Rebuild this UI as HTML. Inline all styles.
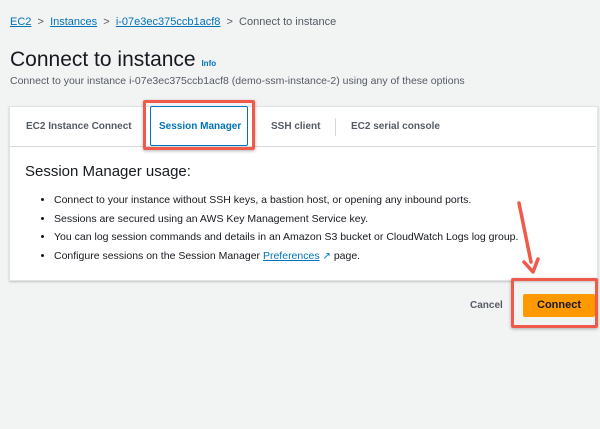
<!DOCTYPE html><html><head><style>
body{margin:0;width:600px;height:429px;background:#f2f3f3;font-family:"Liberation Sans",sans-serif;position:relative;overflow:hidden;color:#16191f}
.a{position:absolute;white-space:nowrap}
.lnk{color:#0073bb;text-decoration:underline}
</style></head><body>
<div class="a" style="left:10px;top:16px;font-size:11px;color:#545b64">
<span class="lnk">EC2</span> &nbsp;&gt;&nbsp; <span class="lnk">Instances</span> &nbsp;&gt;&nbsp; <span class="lnk">i-07e3ec375ccb1acf8</span> &nbsp;&gt;&nbsp; <span style="color:#545b64">Connect to instance</span></div>
<div class="a" style="left:10px;top:48px;font-size:21px">Connect to instance <span style="font-size:8px;font-weight:bold;color:#0073bb">Info</span></div>
<div class="a" style="left:10px;top:75px;font-size:10.5px;color:#545b64">Connect to your instance i-07e3ec375ccb1acf8 (demo-ssm-instance-2) using any of these options</div>
<div class="a" style="left:9px;top:106px;width:587px;height:173px;background:#fff;border:1px solid #e1e4e6;box-shadow:0 1px 2px rgba(0,0,0,.2)"></div>
<div class="a" style="left:10px;top:146px;width:586px;height:1px;background:#d5dbdb"></div>
<div class="a" style="left:26px;top:121px;font-size:10px;font-weight:bold;color:#545b64">EC2 Instance Connect</div>
<div class="a" style="left:150px;top:106px;width:96px;height:38px;border:1.5px solid #0073bb;border-radius:2px"></div>
<div class="a" style="left:159px;top:121px;font-size:10px;font-weight:bold;color:#0073bb">Session Manager</div>
<div class="a" style="left:143px;top:100px;width:106px;height:44px;border:3px solid #f05a4a;border-radius:2px;box-shadow:0 1px 3px rgba(0,0,0,.3)"></div>
<div class="a" style="left:255px;top:118px;width:1px;height:18px;background:#d5dbdb"></div>
<div class="a" style="left:271px;top:121px;font-size:10px;font-weight:bold;color:#545b64">SSH client</div>
<div class="a" style="left:335px;top:118px;width:1px;height:18px;background:#d5dbdb"></div>
<div class="a" style="left:351px;top:121px;font-size:10px;font-weight:bold;color:#545b64">EC2 serial console</div>
<div class="a" style="left:25px;top:163px;font-size:15px">Session Manager usage:</div>
<ul class="a" style="left:0;top:191px;margin:0;padding-left:54px;font-size:10.5px;line-height:18.5px">
<li>Connect to your instance without SSH keys, a bastion host, or opening any inbound ports.</li>
<li>Sessions are secured using an AWS Key Management Service key.</li>
<li>You can log session commands and details in an Amazon S3 bucket or CloudWatch Logs log group.</li>
<li>Configure sessions on the Session Manager <span class="lnk">Preferences</span> <span style="color:#0073bb;font-size:10px">&#x2197;&#xFE0E;</span> page.</li></ul>
<div class="a" style="left:470px;top:300px;font-size:10px;font-weight:bold;color:#545b64">Cancel</div>
<div class="a" style="left:523px;top:294px;width:72px;height:23px;background:#ff9900;border-radius:2px;font-size:11px;font-weight:bold;text-align:center;line-height:23px">Connect</div>
<div class="a" style="left:511px;top:278px;width:81px;height:44px;border:3px solid #f05a4a;border-radius:2px;box-shadow:0 1px 3px rgba(0,0,0,.3)"></div>
<svg class="a" style="left:0;top:0" width="600" height="429"><line x1="519" y1="203" x2="531" y2="262" stroke="#f05a4a" stroke-width="3.5" stroke-linecap="round"/><path d="M524 262 L533 272 L538 259" fill="none" stroke="#f05a4a" stroke-width="3.5" stroke-linecap="round" stroke-linejoin="round"/></svg>
</body></html>
